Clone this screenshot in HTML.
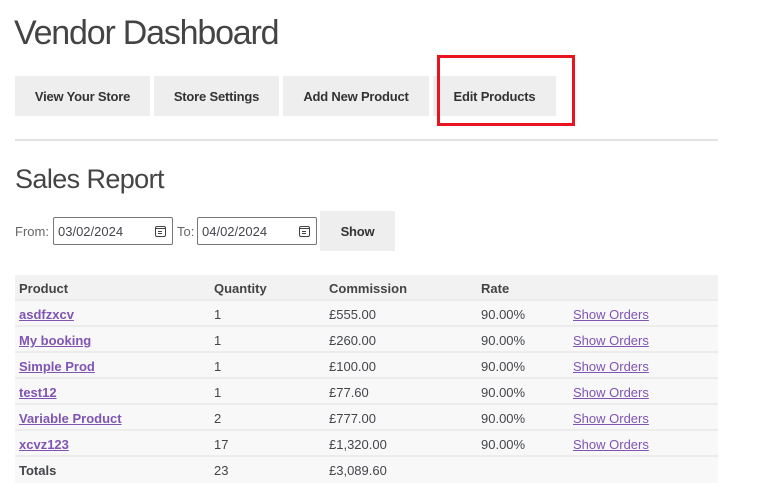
<!DOCTYPE html>
<html><head><style>
*{margin:0;padding:0;box-sizing:border-box}
body{width:768px;height:493px;background:#fff;font-family:"Liberation Sans",sans-serif;color:#43454b;position:relative;overflow:hidden}
.a{position:absolute;white-space:nowrap}
.btn{position:absolute;background:#eeeeee;color:#333;font-weight:bold;font-size:13px;display:flex;align-items:center;justify-content:center;letter-spacing:-0.2px}
.inp{position:absolute;border:1px solid #777;border-radius:2px;background:#fff;font-size:13px;color:#43454b;padding-left:4px;display:flex;align-items:center;top:217px;height:28px}
.cal{position:absolute;right:6px;top:8px;width:11px;height:11px;border:1.5px solid #444;border-radius:2px}
.cal:before{content:"";position:absolute;left:0;right:0;top:1px;border-top:1.5px solid #444}
.cal:after{content:"";position:absolute;left:2px;top:4px;width:4px;height:1px;background:#444;box-shadow:0 2px 0 #444}
.row{position:absolute;left:15px;width:703px;height:26px;background:#f8f8f8;border-bottom:2px solid #ececec;font-size:13px}
.row span{position:absolute;top:6px}
.lk{color:#7f54b3;text-decoration:underline;font-weight:bold}
.so{color:#7f54b3;text-decoration:underline}
</style></head><body>
<div class="a" style="left:14px;top:14px;font-size:34px;letter-spacing:-1.2px;color:#444">Vendor Dashboard</div>
<div class="btn" style="left:15px;top:76px;width:135px;height:40px">View Your Store</div>
<div class="btn" style="left:154px;top:76px;width:125px;height:40px">Store Settings</div>
<div class="btn" style="left:283px;top:76px;width:146px;height:40px">Add New Product</div>
<div class="btn" style="left:433px;top:76px;width:123px;height:40px">Edit Products</div>
<div class="a" style="left:437px;top:55px;width:138px;height:71px;border:3.5px solid #e8141f"></div>
<div class="a" style="left:15px;top:139px;width:703px;height:2px;background:#e2e2e2"></div>
<div class="a" style="left:15px;top:164px;font-size:27px;color:#444;letter-spacing:-0.6px">Sales Report</div>
<div class="a" style="left:15px;top:224px;font-size:13px;color:#666">From:</div>
<div class="inp" style="left:53px;width:120px">03/02/2024<div class="cal"></div></div>
<div class="a" style="left:177px;top:224px;font-size:13px;color:#666">To:</div>
<div class="inp" style="left:197px;width:120px">04/02/2024<div class="cal"></div></div>
<div class="btn" style="left:320px;top:211px;width:75px;height:40px">Show</div>
<div class="row" style="top:275px;background:#f2f2f2;font-weight:bold;color:#444"><span style="left:4px">Product</span><span style="left:199px">Quantity</span><span style="left:314px">Commission</span><span style="left:466px">Rate</span></div>
<div class="row" style="top:301px"><span class="lk" style="left:4px">asdfzxcv</span><span style="left:199px">1</span><span style="left:314px">£555.00</span><span style="left:466px">90.00%</span><span class="so" style="left:558px">Show Orders</span></div>
<div class="row" style="top:327px"><span class="lk" style="left:4px">My booking</span><span style="left:199px">1</span><span style="left:314px">£260.00</span><span style="left:466px">90.00%</span><span class="so" style="left:558px">Show Orders</span></div>
<div class="row" style="top:353px"><span class="lk" style="left:4px">Simple Prod</span><span style="left:199px">1</span><span style="left:314px">£100.00</span><span style="left:466px">90.00%</span><span class="so" style="left:558px">Show Orders</span></div>
<div class="row" style="top:379px"><span class="lk" style="left:4px">test12</span><span style="left:199px">1</span><span style="left:314px">£77.60</span><span style="left:466px">90.00%</span><span class="so" style="left:558px">Show Orders</span></div>
<div class="row" style="top:405px"><span class="lk" style="left:4px">Variable Product</span><span style="left:199px">2</span><span style="left:314px">£777.00</span><span style="left:466px">90.00%</span><span class="so" style="left:558px">Show Orders</span></div>
<div class="row" style="top:431px"><span class="lk" style="left:4px">xcvz123</span><span style="left:199px">17</span><span style="left:314px">£1,320.00</span><span style="left:466px">90.00%</span><span class="so" style="left:558px">Show Orders</span></div>
<div class="row" style="top:457px;border-bottom:none"><span style="left:4px;font-weight:bold">Totals</span><span style="left:199px">23</span><span style="left:314px">£3,089.60</span></div>
</body></html>
